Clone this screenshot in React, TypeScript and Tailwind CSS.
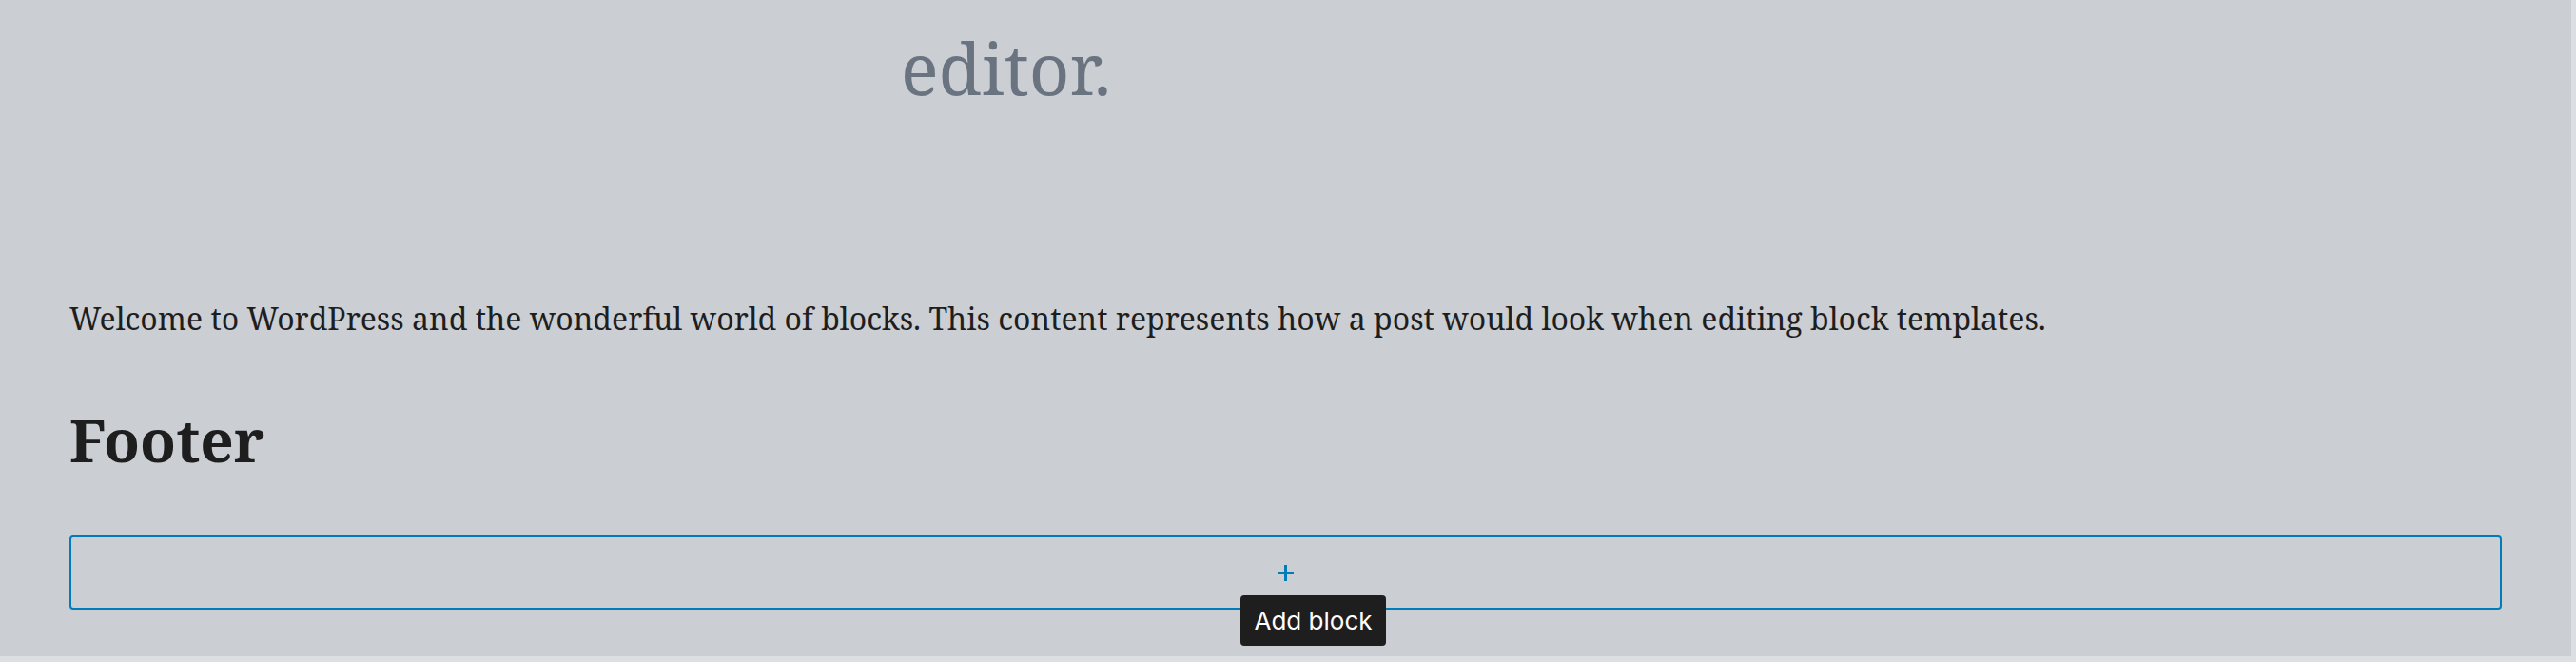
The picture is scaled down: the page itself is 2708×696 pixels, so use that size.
export default function App() {
  return (
    <div className="w-[2708px] h-[696px] bg-[#dddee1]">
      <div
        className="w-[2703px] h-[690px] bg-[#cbced3] overflow-hidden px-[73px] pt-[29px] text-[#1e1e1e]"
        style={{ fontFamily: '"Noto Serif", "DejaVu Serif", serif' }}
      >
        {/* tail of the centered site title */}
        <p className="ml-[874px] text-[74px] leading-[86px] text-[#6a7480]">editor.</p>

        <p className="mt-[196px] text-[32px] leading-[48px]">
          Welcome to WordPress and the wonderful world of blocks. This content represents how a post would look when editing block templates.
        </p>

        <h2 className="mt-[66px] text-[62px] leading-[74px] font-bold">Footer</h2>

        {/* empty block appender */}
        <div className="relative mt-[64px] h-[78px] border-2 border-[#007cba] rounded-[4px] flex items-center justify-center">
          <svg width="17" height="17" viewBox="0 0 17 17" className="text-[#007cba]">
            <rect x="7" y="0" width="3" height="17" fill="currentColor" />
            <rect x="0" y="7" width="17" height="3" fill="currentColor" />
          </svg>
          <div
            className="absolute left-[1229px] top-[61px] w-[153px] h-[53px] rounded-[4px] bg-[#1e1e1e] text-white text-[26px] flex items-center justify-center"
            style={{ fontFamily: 'Inter, "Liberation Sans", sans-serif' }}
          >
            Add block
          </div>
        </div>
      </div>
    </div>
  );
}
